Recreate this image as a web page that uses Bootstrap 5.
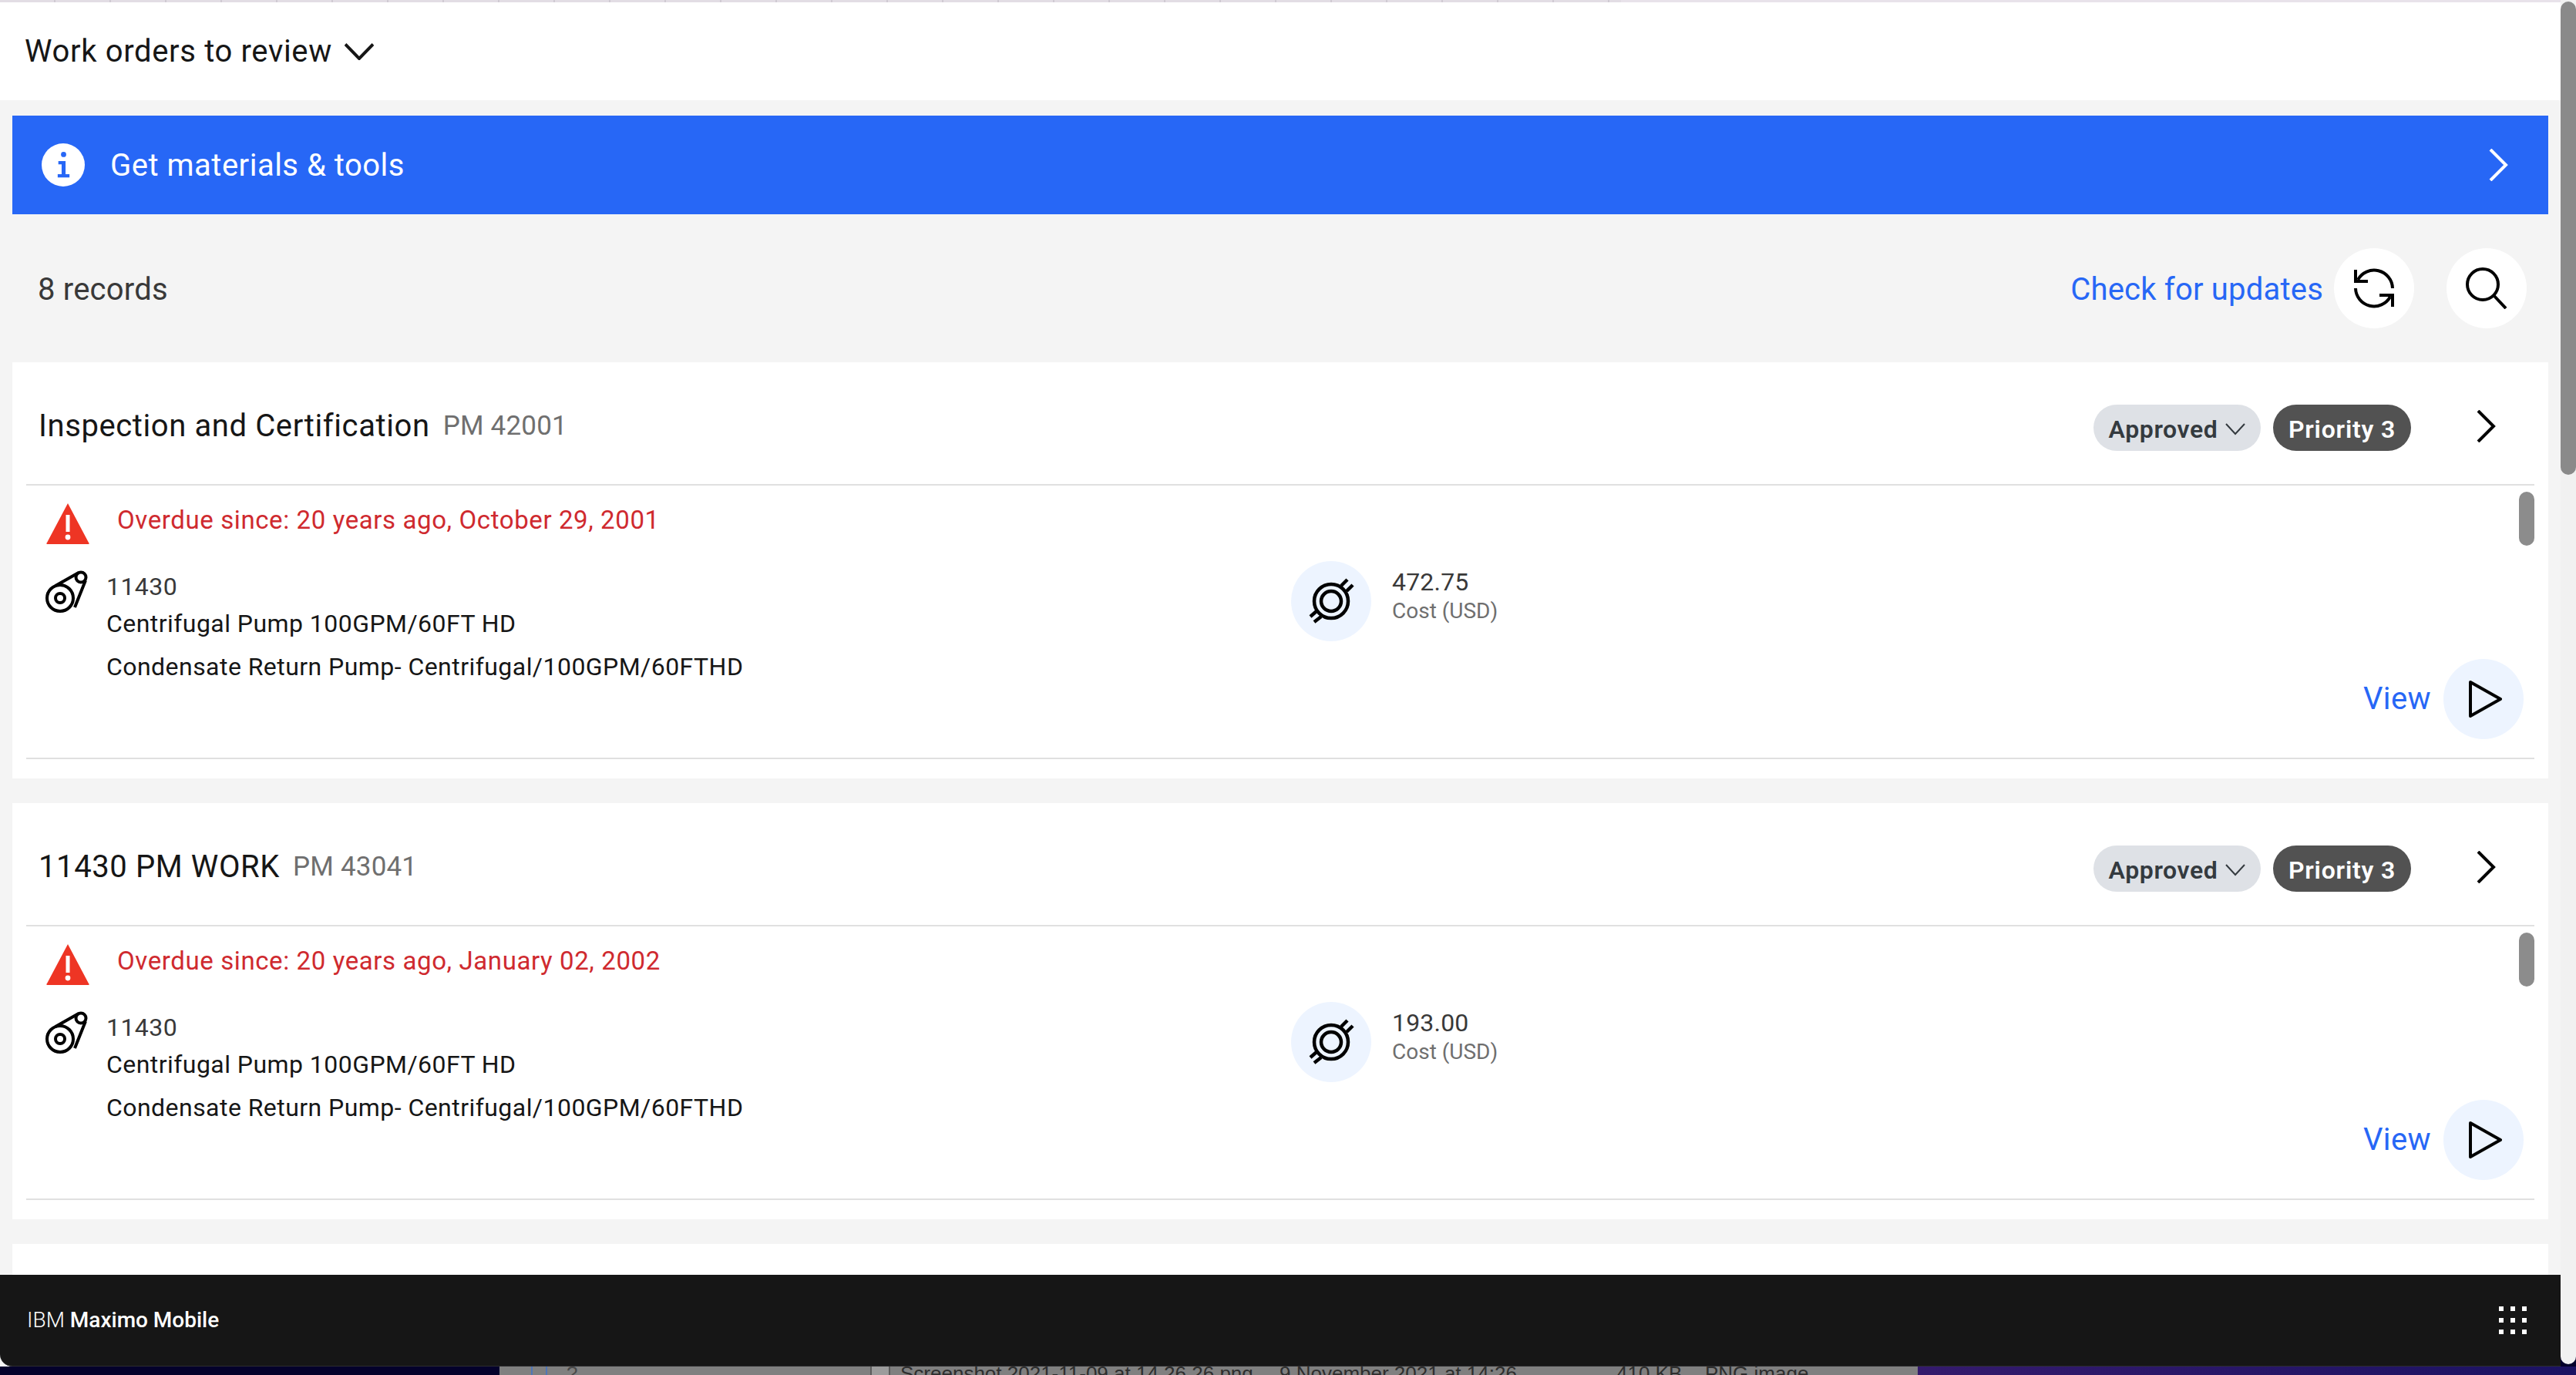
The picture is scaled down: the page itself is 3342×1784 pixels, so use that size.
<!DOCTYPE html>
<html lang="en">
<head>
  <meta charset="UTF-8">
  <title>Work orders to review</title>
  <link href="https://cdn.jsdelivr.net/npm/bootstrap@5.3.2/dist/css/bootstrap.min.css" rel="stylesheet">
  <script src="https://cdn.jsdelivr.net/npm/bootstrap@5.3.2/dist/js/bootstrap.bundle.min.js"></script>
  <style>
    html, body { height: 100%; overflow: hidden; }
    body {
      background-color: #04012b;
      font-family: "Roboto", "Liberation Sans", sans-serif;
      color: #161616;
    }
    .app-frame { position: relative; height: 1784px; overflow: hidden; }
    .app-page { height: 1773px; background: #f4f4f4; overflow: hidden; margin-right: 20px; }
    .top-strip { height: 3px; }
    .strip-tabs { width: 2103px; background: repeating-linear-gradient(90deg, #e2dde4 0 70px, #cfcad2 70px 72px); }
    .strip-rest { background: #e8e2ea; }
    .page-head { height: 127px; padding-left: 32px; font-size: 40px; letter-spacing: .65px; background: #fff; margin-bottom: 20px; }
    .info-bar { height: 128px; margin: 0 16px; padding: 0 52px 0 38px; background: #2767f6; color: #fff; font-size: 40px; letter-spacing: .5px; }
    .info-dot { width: 56px; height: 56px; border-radius: 50%; background: #fff; }
    .info-label { margin-left: 33px; padding-top: 2px; }
    .tool-row { height: 192px; padding: 0 44px 0 49px; font-size: 40px; letter-spacing: .2px; color: #393939; }
    .tool-text { padding-top: 4px; }
    .blue-link { color: #2767f6; }
    .update-link { margin-right: 14px; }
    .search-btn { margin-left: 42px; }
    .round-btn { width: 104px; height: 104px; border-radius: 50%; background: #fff; }
    .round-tint { background: #edf4ff; }
    .wo-card { height: 540px; margin: 0 16px 32px; padding: 0 18px; background: #fff; }
    .wo-head { height: 160px; padding: 8px 50px 0 16px; border-bottom: 2px solid #e0e0e0; }
    .wo-title { font-size: 40px; letter-spacing: .6px; }
    .wo-num { font-size: 35px; letter-spacing: .2px; color: #6f6f6f; margin-left: 17px; }
    .pill-status, .pill-prio { height: 60px; margin-top: 4px; padding-top: 3px; border-radius: 30px; font-size: 32px; font-weight: 600; letter-spacing: .6px; }
    .pill-status { width: 217px; background: #dee1e6; color: #343a3f; gap: 10px; }
    .pill-prio { width: 179px; background: #525252; color: #fff; margin-left: 16px; margin-right: 84px; letter-spacing: .8px; }
    .wo-body { position: relative; height: 355px; border-bottom: 2px solid #e0e0e0; }
    .overdue { height: 70px; padding: 22px 0 0 26px; font-size: 33px; letter-spacing: .6px; color: #cf2a2f; }
    .overdue-icon { margin-right: 36px; }
    .overdue-text { margin-top: -2px; }
    .wo-row { margin-top: 28px; }
    .asset-col { padding: 12px 0 0 24px; }
    .asset-line { font-size: 32px; line-height: 48px; letter-spacing: .45px; margin-top: -3px; }
    .asset-grey { color: #393939; }
    .cost-box { margin-left: 3px; margin-top: -12px; }
    .cost-val { font-size: 32px; line-height: 38px; letter-spacing: .2px; color: #393939; }
    .cost-lbl { font-size: 28px; line-height: 38px; color: #6f6f6f; }
    .cost-col { padding-left: 14px; }
    .view-row { margin-top: -34px; padding-right: 14px; }
    .view-link { font-size: 40px; letter-spacing: .4px; }
    .inner-thumb { position: absolute; top: 8px; right: 0; width: 20px; height: 70px; border-radius: 10px; background: #8c8c8c; }
    .page-track { position: absolute; top: 0; right: 0; width: 20px; height: 1770px; border-radius: 0 0 10px 10px; background: #f1f1f1; }
    .page-thumb { position: absolute; top: 2px; right: 0; width: 20px; height: 614px; border-radius: 10px; background: #8a8a8a; }
    .app-foot { position: absolute; left: 0; top: 1654px; width: 3322px; height: 119px; padding: 0 44px 0 35px; background: #161616; color: #fff; font-size: 28px; border-bottom: 1px solid #2c2c2e; border-radius: 0 0 0 16px; }
    .foot-ibm { font-weight: 300; }
    .foot-name { font-weight: 500; }
    .desk-grey { position: absolute; left: 648px; top: 1773px; width: 1840px; height: 11px; background: #808080; color: #2e2e2e; font: 26px/30px "Liberation Sans", sans-serif; overflow: hidden; }
    .desk-list { margin-top: -6px; }
    .desk-list span { white-space: nowrap; }
    .desk-help { margin-left: 41px; width: 21px; height: 30px; border: 2px solid #4f76b8; flex: none; }
    .desk-q { margin-left: 25px; width: 394px; color: #4a4a4a; flex: none; }
    .desk-doc { width: 26px; height: 30px; background: #9c9c9c; border: 2px solid #5c5c5c; flex: none; }
    .desk-file { margin-left: 13px; width: 492px; flex: none; }
    .desk-date { width: 437px; flex: none; }
    .desk-size { width: 115px; flex: none; }
    .desk-purple { position: absolute; left: 2488px; top: 1773px; width: 854px; height: 11px; background: linear-gradient(90deg, #341a6c, #1b1262); }
  </style>
</head>
<body>

<svg width="0" height="0" class="d-none">
  <symbol id="ic-right" viewBox="0 0 26 42"><path d="M3 1 23 21 3 41" fill="none" stroke="currentColor" stroke-width="4"/></symbol>
  <symbol id="ic-warn" viewBox="0 0 56 54"><path d="M28 1 55 52a1 1 0 0 1-1 2H2a1 1 0 0 1-1-2z" fill="#ee3524"/><rect x="25.5" y="16" width="5" height="22" fill="#fff"/><circle cx="28" cy="45" r="3.4" fill="#fff"/></symbol>
  <symbol id="ic-pump" viewBox="0 0 56 56"><g fill="none" stroke="#000" stroke-width="4"><circle cx="20" cy="36" r="17"/><circle cx="20" cy="36" r="6"/><circle cx="47" cy="9" r="6.5"/><path d="M14 20 44 3M39 48 53 13"/></g></symbol>
  <symbol id="ic-cost" viewBox="0 0 60 60"><g fill="none" stroke="#000" stroke-width="4.5"><circle cx="30" cy="30" r="22"/><circle cx="30" cy="30" r="13"/><path d="M43 10 51 2M50 17 58 9M3 50 11 43M8 57 17 50"/></g></symbol>
  <symbol id="ic-play" viewBox="0 0 48 48"><path d="M7 2 46 24 7 46z" fill="none" stroke="#000" stroke-width="4" stroke-linejoin="round"/></symbol>
  <symbol id="ic-down" viewBox="0 0 26 16"><path d="M1 1 13 14 25 1" fill="none" stroke="#343a3f" stroke-width="2"/></symbol>
</svg>

<div class="app-frame">
  <div class="desk-grey">
    <div class="desk-list d-flex">
      <span class="desk-help"></span>
      <span class="desk-q">?</span>
      <span class="desk-doc"></span>
      <span class="desk-file">Screenshot 2021-11-09 at 14.26.26.png</span>
      <span class="desk-date">9 November 2021 at 14:26</span>
      <span class="desk-size">410 KB</span>
      <span>PNG image</span>
    </div>
  </div>
  <div class="desk-purple"></div>

  <div class="app-page">
    <div class="top-strip d-flex">
      <div class="strip-tabs"></div>
      <div class="strip-rest flex-grow-1"></div>
    </div>
    <div class="page-head d-flex align-items-center gap-3">
      <span>Work orders to review</span>
      <svg width="38" height="22" viewBox="0 0 38 22"><path d="M1 1.5 19 20 37 1.5" fill="none" stroke="#161616" stroke-width="4"/></svg>
    </div>

    <div class="info-bar d-flex align-items-center">
      <div class="info-dot d-flex align-items-center justify-content-center">
        <svg width="17" height="34" viewBox="0 0 20 40"><circle cx="10" cy="4" r="4" fill="#2767f6"/><path d="M2 14h11v20h6v5H1v-5h6V19H2z" fill="#2767f6"/></svg>
      </div>
      <span class="info-label flex-grow-1">Get materials &amp; tools</span>
      <svg width="26" height="42" class="text-white"><use href="#ic-right"/></svg>
    </div>

    <div class="tool-row d-flex align-items-center">
      <span class="tool-text flex-grow-1">8 records</span>
      <span class="tool-text blue-link update-link">Check for updates</span>
      <div class="round-btn d-flex align-items-center justify-content-center">
        <svg width="52" height="52" viewBox="0 0 52 52" fill="none" stroke="#000" stroke-width="4"><path d="M5 15A24 24 0 0 1 50 26M2 26A24 24 0 0 0 47 37"/><path d="M2 2V17H18M50 50V35H33"/></svg>
      </div>
      <div class="round-btn search-btn d-flex align-items-center justify-content-center">
        <svg width="54" height="54" viewBox="0 0 54 54" fill="none" stroke="#000" stroke-width="4"><circle cx="22" cy="22" r="20"/><path d="M36 36 52 53"/></svg>
      </div>
    </div>

    <div class="wo-card">
      <div class="wo-head d-flex align-items-center">
        <span class="wo-title">Inspection and Certification</span>
        <span class="wo-num flex-grow-1">PM 42001</span>
        <span class="pill-status d-inline-flex align-items-center justify-content-center">Approved
          <svg width="26" height="16"><use href="#ic-down"/></svg>
        </span>
        <span class="pill-prio d-inline-flex align-items-center justify-content-center">Priority 3</span>
        <svg width="26" height="42" class="text-black"><use href="#ic-right"/></svg>
      </div>
      <div class="wo-body">
        <div class="inner-thumb"></div>
        <div class="overdue d-flex align-items-start">
          <svg width="56" height="54" class="overdue-icon"><use href="#ic-warn"/></svg>
          <span class="overdue-text">Overdue since: 20 years ago, October 29, 2001</span>
        </div>
        <div class="row g-0 wo-row">
          <div class="col-6 d-flex asset-col">
            <svg width="56" height="56" class="me-4 flex-shrink-0"><use href="#ic-pump"/></svg>
            <div class="asset-line">
              <div class="asset-grey">11430</div>
              <div>Centrifugal Pump 100GPM/60FT HD</div>
              <div class="mt-2">Condensate Return Pump- Centrifugal/100GPM/60FTHD</div>
            </div>
          </div>
          <div class="col-6 d-flex align-items-center align-self-start cost-col">
            <div class="round-btn round-tint d-flex align-items-center justify-content-center me-4">
              <svg width="60" height="60"><use href="#ic-cost"/></svg>
            </div>
            <div class="cost-box">
              <div class="cost-val">472.75</div>
              <div class="cost-lbl">Cost (USD)</div>
            </div>
          </div>
        </div>
        <div class="view-row d-flex align-items-center justify-content-end gap-3">
          <span class="blue-link view-link">View</span>
          <div class="round-btn round-tint d-flex align-items-center justify-content-center">
            <svg width="48" height="48"><use href="#ic-play"/></svg>
          </div>
        </div>
      </div>
    </div>

    <div class="wo-card">
      <div class="wo-head d-flex align-items-center">
        <span class="wo-title">11430 PM WORK</span>
        <span class="wo-num flex-grow-1">PM 43041</span>
        <span class="pill-status d-inline-flex align-items-center justify-content-center">Approved
          <svg width="26" height="16"><use href="#ic-down"/></svg>
        </span>
        <span class="pill-prio d-inline-flex align-items-center justify-content-center">Priority 3</span>
        <svg width="26" height="42" class="text-black"><use href="#ic-right"/></svg>
      </div>
      <div class="wo-body">
        <div class="inner-thumb"></div>
        <div class="overdue d-flex align-items-start">
          <svg width="56" height="54" class="overdue-icon"><use href="#ic-warn"/></svg>
          <span class="overdue-text">Overdue since: 20 years ago, January 02, 2002</span>
        </div>
        <div class="row g-0 wo-row">
          <div class="col-6 d-flex asset-col">
            <svg width="56" height="56" class="me-4 flex-shrink-0"><use href="#ic-pump"/></svg>
            <div class="asset-line">
              <div class="asset-grey">11430</div>
              <div>Centrifugal Pump 100GPM/60FT HD</div>
              <div class="mt-2">Condensate Return Pump- Centrifugal/100GPM/60FTHD</div>
            </div>
          </div>
          <div class="col-6 d-flex align-items-center align-self-start cost-col">
            <div class="round-btn round-tint d-flex align-items-center justify-content-center me-4">
              <svg width="60" height="60"><use href="#ic-cost"/></svg>
            </div>
            <div class="cost-box">
              <div class="cost-val">193.00</div>
              <div class="cost-lbl">Cost (USD)</div>
            </div>
          </div>
        </div>
        <div class="view-row d-flex align-items-center justify-content-end gap-3">
          <span class="blue-link view-link">View</span>
          <div class="round-btn round-tint d-flex align-items-center justify-content-center">
            <svg width="48" height="48"><use href="#ic-play"/></svg>
          </div>
        </div>
      </div>
    </div>

    <div class="wo-card"></div>
  </div>

  <div class="page-track"></div>
  <div class="page-thumb"></div>

  <div class="app-foot d-flex align-items-center justify-content-between">
    <div><span class="foot-ibm">IBM</span> <span class="foot-name">Maximo Mobile</span></div>
    <svg width="36" height="36" viewBox="0 0 36 36" fill="#fff">
      <rect x="0" y="0" width="6" height="6"/><rect x="15" y="0" width="6" height="6"/><rect x="30" y="0" width="6" height="6"/>
      <rect x="0" y="15" width="6" height="6"/><rect x="15" y="15" width="6" height="6"/><rect x="30" y="15" width="6" height="6"/>
      <rect x="0" y="30" width="6" height="6"/><rect x="15" y="30" width="6" height="6"/><rect x="30" y="30" width="6" height="6"/>
    </svg>
  </div>
</div>

</body>
</html>
